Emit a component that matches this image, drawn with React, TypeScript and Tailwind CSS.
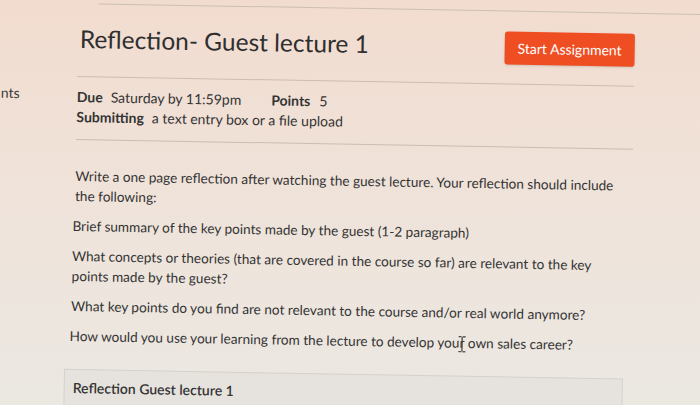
import React from 'react'

const font = { fontFamily: 'Lato, "Open Sans", sans-serif' }

const prompts = [
  'Brief summary of the key points made by the guest (1-2 paragraph)',
  'What concepts or theories (that are covered in the course so far) are relevant to the key points made by the guest?',
  'What key points do you find are not relevant to the course and/or real world anymore?'
]

function Cursor() {
  return (
    <svg
      className="absolute left-[-2px] top-[1px]"
      width="9"
      height="17"
      viewBox="0 0 9 17"
      fill="none"
      stroke="#3a3a3a"
      strokeWidth="1.2"
    >
      <path d="M1 1h3m1 0h3M4.5 1.5v14M1 16h3m1 0h3" />
    </svg>
  )
}

export default function App() {
  return (
    <div
      className="relative h-[405px] w-[700px] overflow-hidden bg-gradient-to-b from-[#f2dccf] via-[#efe3da] to-[#ebe8e2] text-[#343434]"
      style={font}
    >
      <div className="flex flex-col origin-[75px_200px] rotate-[1deg]">
        <div className="ml-[95px] mt-[3px] border-t border-[#cdbfb5]" />
        <div className="flex">
          <aside className="w-[75px] shrink-0 pt-[79px] text-[14px] text-[#3a3a3a]">
            <span className="ml-[-1px]">nts</span>
          </aside>
          <main className="w-[557px] shrink-0">
            <div className="flex items-start justify-between pb-[19px]">
              <h1 className="mt-[18px] ml-[2px] text-[24.5px] leading-[34px] text-[#2f2f2f]">
                Reflection- Guest lecture 1
              </h1>
              <button className="mt-[20px] h-[33px] rounded-[3px] bg-[#ef4e22] px-[13px] text-[14px] text-white shadow-sm">
                Start Assignment
              </button>
            </div>
            <div className="border-t border-[#cbbdb3]" />
            <div className="pt-[10px] pb-[12px] text-[14px] leading-[20px]">
              <div className="flex">
                <span className="font-bold">Due</span>
                <span className="ml-[8px]">Saturday by 11:59pm</span>
                <span className="ml-[30px] font-bold">Points</span>
                <span className="ml-[9px]">5</span>
              </div>
              <div className="flex">
                <span className="font-bold">Submitting</span>
                <span className="ml-[8px]">a text entry box or a file upload</span>
              </div>
            </div>
            <div className="border-t border-[#cbbdb3]" />
            <div className="pt-[26px] text-[13.6px] leading-[20px]">
              <p className="mb-[10px]">
                Write a one page reflection after watching the guest lecture. Your reflection should
                include the following:
              </p>
              {prompts.map(p => (
                <p key={p} className="mb-[10px] ml-[-2px]">
                  {p}
                </p>
              ))}
              <p className="ml-[-3px]">
                How would you use your learning from the lecture to develop you
                <span className="relative">
                  r
                  <Cursor />
                </span>{' '}
                own sales career?
              </p>
            </div>
            <div className="mt-[23px] ml-[-8px] mr-[6px] h-[60px] border border-[#d6d1cb] bg-[#e6e3de] px-[8px] pt-[7px] text-[14px] font-semibold">
              Reflection Guest lecture 1
            </div>
          </main>
        </div>
      </div>
    </div>
  )
}
